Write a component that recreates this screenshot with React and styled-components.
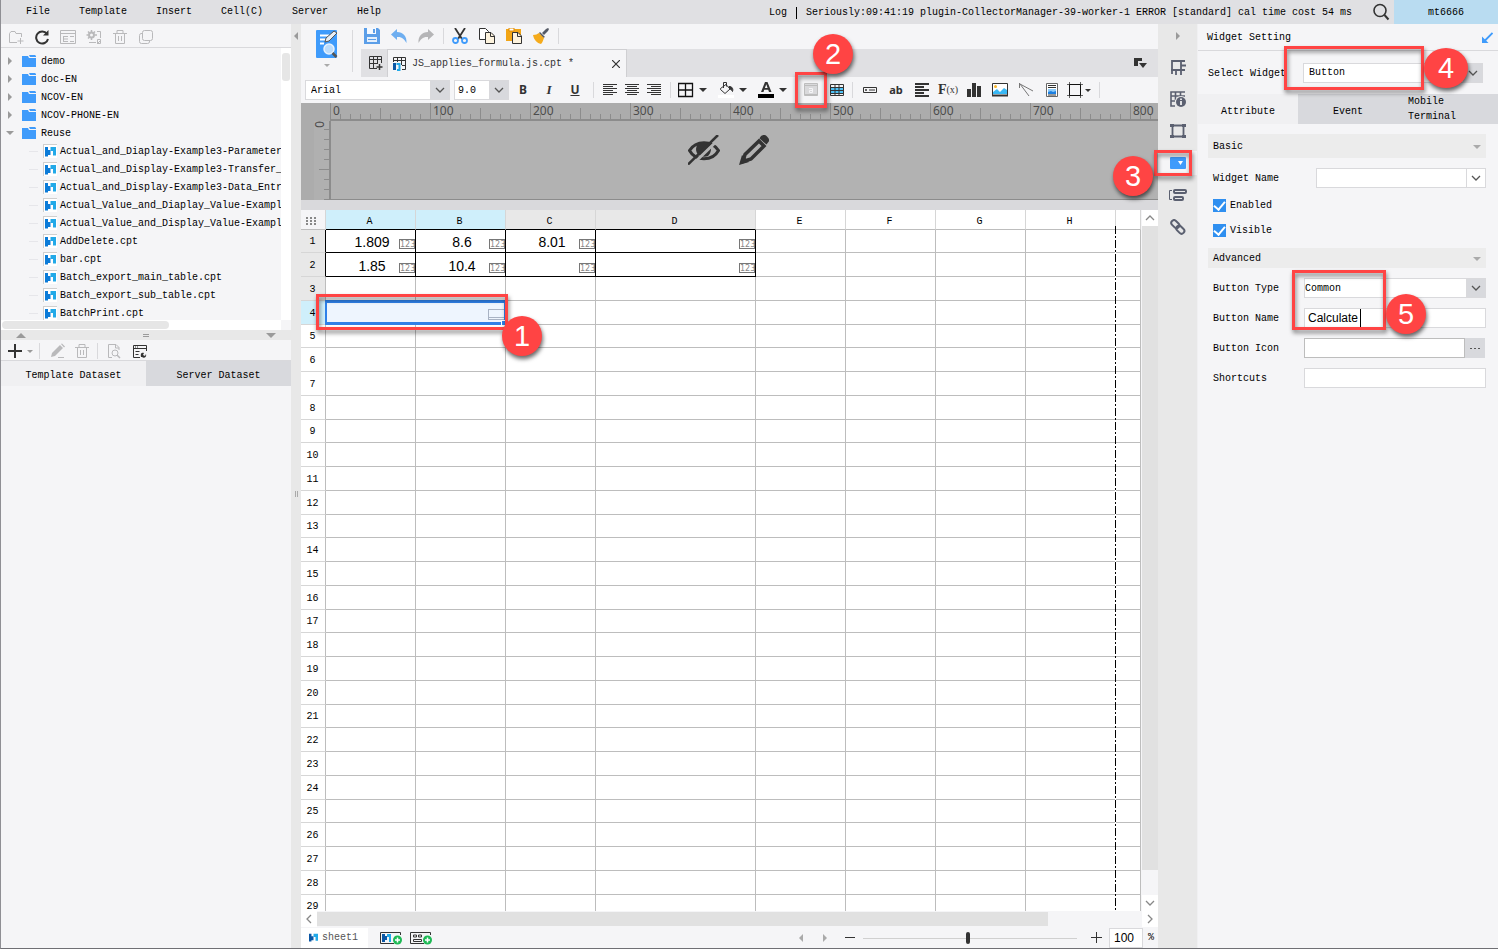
import React, { useState } from "react";
import styled, { createGlobalStyle, css } from "styled-components";

const mono = `"Liberation Mono", "Noto Sans CJK SC", monospace`;
const sans = `"Liberation Sans", Arial, sans-serif`;

const colors = {
  bar: "#e0e0e3",
  panel: "#f5f5f7",
  gutter: "#e8e8e8",
  line: "#d9d9dc",
  tab: "#d8d9dd",
  blue: "#3f9bfb",
  dark: "#333333",
  muted: "#b9b9bb",
  side: "#5b6070",
  grid: "#bdbdbd",
  callout: "#ff4444",
};

const GlobalStyle = createGlobalStyle`
  * {
    box-sizing: border-box;
  }
  body {
    margin: 0;
    overflow: hidden;
    font: 10px/14px ${mono};
    color: #000;
  }
  button, input, select {
    font: inherit;
    color: inherit;
    margin: 0;
    padding: 0;
    border: 0;
    border-radius: 0;
    background: none;
    outline: none;
  }
  svg {
    display: block;
    flex: none;
  }
`;

/* ---------- icons ---------- */

const Svg = ({ w = 16, h = 16, children, ...rest }) => (
  <svg
    width={w}
    height={h}
    viewBox={`0 0 ${w} ${h}`}
    fill="none"
    stroke={colors.dark}
    aria-hidden="true"
    {...rest}
  >
    {children}
  </svg>
);

const Triangle = ({ dir = "down", size = 4, color = "#9a9a9a" }) => {
  const s = size;
  const points = {
    down: `0,0 ${2 * s},0 ${s},${s}`,
    up: `0,${s} ${2 * s},${s} ${s},0`,
    right: `0,0 ${s},${s} 0,${2 * s}`,
    left: `${s},0 0,${s} ${s},${2 * s}`,
  };
  const tall = dir === "left" || dir === "right";
  return (
    <Svg w={tall ? s : 2 * s} h={tall ? 2 * s : s} stroke="none">
      <polygon points={points[dir]} fill={color} />
    </Svg>
  );
};

const Chevron = ({ dir = "down", color = "#555" }) => {
  const paths = {
    down: "M1 3l4 4 4-4",
    up: "M1 7l4-4 4 4",
    left: "M7 1L3 5l4 4",
    right: "M3 1l4 4-4 4",
  };
  return (
    <Svg w={10} h={10} stroke={color} strokeWidth="1.3">
      <path d={paths[dir]} />
    </Svg>
  );
};

const FolderIcon = () => (
  <Svg w={14} h={12} stroke="none">
    <path d="M0 1h6l1 2h7v9H0z" fill={colors.blue} />
    <path d="M7 0h6l1 1v1H8z" fill={colors.blue} />
  </Svg>
);

const Mark = ({ size = 11, dark = "#0b7bd8" }) => (
  <svg width={size} height={size} viewBox="0 0 11 11" aria-hidden="true">
    <path d="M0 1h3v3h2.500v5H3v1.500H0z" fill={dark} />
    <path d="M5.500 1H11v8.500H8V5H5.500z" fill="#22a9e8" />
  </svg>
);

const NewFolderIcon = () => (
  <Svg stroke={colors.muted}>
    <path d="M9 13.500H1.500v-9l1.500-2h4l1 2h5.500V8M12.500 9v6M9.500 12h6" />
  </Svg>
);
const RefreshIcon = () => (
  <Svg strokeWidth="2">
    <path d="M13 5a6 6 0 1 0 1 5" />
    <path d="M14.500 1v5.500H9z" fill={colors.dark} stroke="none" />
  </Svg>
);
const FormIcon = () => (
  <Svg stroke={colors.muted}>
    <path d="M.5 1.500h15v13H.5zM.5 4.500h15M3.500 7v6M3.500 7.500H8M3.500 10H8M3.500 12.500H8M10 7.500h4M10 12.500h4" />
  </Svg>
);
const GearDocIcon = () => (
  <Svg stroke={colors.muted}>
    <circle cx="5.500" cy="6" r="2.500" strokeWidth="2" />
    <path d="M5.500 1v2M5.500 9v2M.5 6h2M9 6h2M2 2.500l1.500 1.500M9 2.500L7.500 4M2 9.500L3.500 8" strokeWidth="1.500" />
    <path d="M11 2.500h3.500V9M3 13.500h7M11.500 10.500h3v4h-3zM11 15l4-4" />
  </Svg>
);
const TrashIcon = () => (
  <Svg stroke={colors.muted}>
    <path d="M1 4.500h14M5 4V1.500h6V4M3.500 5v9.500h9V5M6.500 7v5M9.500 7v5" />
  </Svg>
);
const StackIcon = () => (
  <Svg stroke={colors.muted}>
    <rect x="4.500" y="1.500" width="10" height="10" rx="2" />
    <path d="M4 4.500H3a2 2 0 0 0-1.500 2v6a2 2 0 0 0 2 2h6a2 2 0 0 0 2-1.500V12" />
  </Svg>
);
const PlusIcon = ({ size = 14, width = 2 }) => (
  <Svg w={size} h={size} strokeWidth={width}>
    <path d={`M0 ${size / 2}h${size}M${size / 2} 0v${size}`} />
  </Svg>
);
const EditIcon = () => (
  <Svg stroke="none">
    <path d="M1 14l1-4 8-8 3 3-8 8zM11 1l1-.5L15 3.500l-1 1z" fill={colors.muted} />
    <path d="M8 14.500h6" stroke={colors.muted} />
  </Svg>
);
const PreviewDocIcon = () => (
  <Svg stroke={colors.muted}>
    <path d="M6 14.500H2.500v-13H10l3 3V7M9.500 1.500v3.500H13" />
    <circle cx="9" cy="10" r="3" />
    <path d="M11 12l3 3" strokeWidth="1.500" />
  </Svg>
);
const DataConfigIcon = () => (
  <Svg>
    <path d="M8 14.500H1.500v-12h13V8M1.500 5.500h13M3.500 8.500h4M3.500 11.500h3M3 4h1M5 4h1" />
    <path d="M9 14c-1-4 1-5 3-4l-1 2 2 1 1-2c1 3-2 5-4 3z" fill={colors.dark} stroke="none" />
  </Svg>
);

const PreviewIcon = () => (
  <Svg w={24} h={30} stroke="none">
    <rect x="1" y="2" width="21" height="28" rx="1" fill={colors.blue} />
    <path d="M5 7.500h9M5 11.500h6M5 15.500h4" stroke="#fff" strokeWidth="2" />
    <path d="M10 14l1-4 8-7 3 2-8 8z" fill="#e8eef5" stroke="#555" />
    <circle cx="14" cy="21" r="5" fill="#bcdcfb" stroke="#e8f2fd" strokeWidth="1.500" />
    <path d="M17.500 25l4 4" stroke="#555" strokeWidth="2.500" />
  </Svg>
);
const SaveIcon = () => (
  <Svg stroke="none">
    <path d="M0 0h14l2 2v14H0z" fill="#5b9ee8" />
    <path d="M3 0h9v6H3z" fill="#f5f9ff" />
    <path d="M9 1h2v4H9z" fill="#5b9ee8" />
    <path d="M3 9h10v5H3z" fill="#e4effc" />
    <path d="M4 11.500h8" stroke="#5b9ee8" />
  </Svg>
);
const UndoIcon = ({ color = "#6eaef0", flip }) => (
  <Svg stroke="none">
    <path
      d="M6 1L0 6.500 6 12V9c5-.5 7 2 9.500 6C16 8 12 4 6 4z"
      fill={color}
      transform={flip ? "matrix(-1 0 0 1 16 0)" : undefined}
    />
  </Svg>
);
const CutIcon = () => (
  <Svg>
    <path d="M3 0l7 11M13 0L6 11" strokeWidth="1.800" />
    <circle cx="3.500" cy="12.500" r="2.500" stroke={colors.blue} strokeWidth="1.800" />
    <circle cx="12.500" cy="12.500" r="2.500" stroke={colors.blue} strokeWidth="1.800" />
  </Svg>
);
const CopyIcon = () => (
  <Svg>
    <path d="M.5.5h6l3 3v8h-9z" fill="#fff" />
    <path d="M6.500 4.500h5.500l3.500 3.500v7.500h-9z" fill="#fdf3de" />
    <path d="M11.500 4.500v4h4" />
  </Svg>
);
const PasteIcon = () => (
  <Svg>
    <path d="M0 1h15v12H0z" fill="#f2a516" stroke="none" />
    <path d="M3 0h5v3H3z" fill="#fff" stroke="#e08a00" />
    <path d="M6.500 4.500h5.500l3.500 3.500v7.500h-9z" fill="#fdf3de" />
    <path d="M11.500 4.500v4h4" />
  </Svg>
);
const BrushIcon = () => (
  <Svg stroke="none">
    <path d="M9 5l4-4 2-1 1 1-1 2-4 4z" fill="#555a66" />
    <path d="M7 4l5 5-2 1-4-5z" fill="#555a66" />
    <path d="M0 7c3 0 4-1 6-2l5 5c-1 2-1 4-3 6-4-1-7-4-8-9z" fill="#f5ab1c" />
  </Svg>
);
const NewSheetIcon = ({ mark }) => (
  <Svg>
    <path d="M9 13.500H1.500v-12h12V8M1.500 4.500h12M1.500 8.500h8M5.500 2v11M9.500 2v7" />
    {mark ? (
      <>
        <path d="M0 6h9v9H0z" fill={colors.panel} stroke="none" />
        <path d="M1 7h3v7H1z" fill="#0b57a5" stroke="none" />
        <path d="M4.500 8h3v6H5" stroke="#22a9e8" strokeWidth="2" />
        <path d="M10 13.500h3.500V8M10 9.500h3" />
      </>
    ) : (
      <path d="M11.500 9v6M8.500 12h6" strokeWidth="1.500" />
    )}
  </Svg>
);
const WindowListIcon = () => (
  <Svg w={13} h={12} stroke="none">
    <path d="M0 1h8v3H4v5H0z" fill={colors.dark} />
    <path d="M5 6h8l-4 5z" fill={colors.dark} />
  </Svg>
);
const AlignIcon = ({ align }) => {
  const rows = [14, 10, 14, 10, 14, 10];
  return (
    <Svg w={14} h={14}>
      {rows.map((len, i) => {
        const x = { left: 0, center: (14 - len) / 2, right: 14 - len }[align];
        return <path key={i} d={`M${x} ${i * 2 + 1.5}h${len}`} />;
      })}
    </Svg>
  );
};
const BorderIcon = () => (
  <Svg>
    <path d="M.5 1.500h14v13H.5zM7.500 1v14M0 8h15" strokeWidth="1.300" stroke="#111" />
  </Svg>
);
const BucketIcon = () => (
  <Svg>
    <path d="M2.500 6.500L8 2.500l4 4.500-5 4.500-4.500-4z" />
    <path d="M5.500 6V.500h3v4" />
    <path d="M11 4.500c3 0 4.500 2 3.500 5-1-2-2-2-2-2z" fill={colors.dark} />
    <path d="M0 13h16v3H0z" fill="#fff" stroke="none" />
  </Svg>
);
const FontColorIcon = () => (
  <Svg stroke="none">
    <path d="M3 10L7 0h2.500l4 10h-2.500l-.8-2.200H6.200L5.500 10zM6.900 6h2.700L8.300 2.300z" fill={colors.dark} fillRule="evenodd" />
    <path d="M0 12h16v4H0z" fill="#000" />
  </Svg>
);
const MergeIcon = () => (
  <Svg w={14} h={14} stroke="#bdbdbd">
    <path d="M.5.5h13v12H.5z" fill="#d9d9db" />
    <path d="M1 2.500h12M1 11.500h12" />
    <path d="M5 5.500h3.500v4H5.500v-2h3" stroke="#f5f5f7" />
  </Svg>
);
const TableIcon = () => (
  <Svg w={14} h={14}>
    <path d="M1 4h12v6H1z" fill="#4fc3f7" stroke="none" />
    <path d="M.5 1.500h13v11H.5zM1 4.500h12M1 7.500h12M1 10.500h12M5 1v12M9 1v12" />
  </Svg>
);
const InputIcon = () => (
  <Svg w={14} h={6}>
    <path d="M.5.5h13v5H.5zM6 3h6M2.500 2.500h1v1h-1z" />
  </Svg>
);
const TextIcon = () => (
  <Svg w={14} h={14} strokeWidth="1.800">
    <path d="M0 1h14M0 4h9M0 7h14M0 10h9M0 13h14" />
  </Svg>
);
const ChartIcon = () => (
  <Svg w={14} h={14} stroke="none">
    <path d="M0 6h4v8H0zM5 0h4v14H5zM10 3h4v11h-4z" fill={colors.dark} />
  </Svg>
);
const ImageIcon = () => (
  <Svg w={16} h={14}>
    <path d="M.5.5h15v12H.5z" fill="#fff" />
    <path d="M1 11V9l4-3 3 3 4-4 3 2v4z" fill="#39b8f5" stroke="none" />
    <circle cx="3.500" cy="3.500" r="1.500" fill="#f8b62b" stroke="none" />
    <path d="M0 12.500h16" strokeWidth="2" />
  </Svg>
);
const SlashIcon = () => (
  <Svg w={14} h={14} stroke="#777">
    <path d="M1 1l9 12M1 1l13 7M.5 0v5" />
  </Svg>
);
const ReportIcon = () => (
  <Svg w={12} h={14}>
    <path d="M.5.5h11v13H.5z" fill="#fff" stroke="#666" />
    <path d="M2 2.500h8M2 4.500h8M2 12h8" />
    <path d="M2 6h8v5H2z" fill="#8ccbfa" stroke="none" />
    <path d="M2 11V9l3-1 2 1 3-1v3z" fill="#1d7fe0" stroke="none" />
  </Svg>
);
const FrameIcon = () => (
  <Svg>
    <path d="M2.500 0v16M13.500 0v16M0 2.500h16M0 13.500h16" stroke="#666" />
    <path d="M2.500 2.500h11v11h-11z" stroke="#111" />
  </Svg>
);
const EyeOffIcon = () => (
  <Svg w={32} h={30}>
    <path d="M1.500 15.500C8 5 24 5 30.500 15.500c-6 11-23 11-29 0z" strokeWidth="3" />
    <path d="M9 9c4-3 10-2 13 0 2 4 1 9-2 12-5 2-12 0-12-7z" fill={colors.dark} stroke="none" />
    <path d="M4 30L32 3" stroke="#b2b2b2" strokeWidth="3" />
    <path d="M0 29.500L30 0" strokeWidth="2.500" />
  </Svg>
);
const PencilIcon = () => (
  <Svg w={32} h={30}>
    <path d="M4 26.500l2-7L20 6l5 5-13 13z" strokeWidth="3.500" />
    <path d="M0 30l3-10 7 7z" fill={colors.dark} stroke="none" />
    <path d="M21 2.500c2-3 5-3 7-1s3 4 1 6l-1.500 2-7-6z" fill={colors.dark} stroke="none" />
  </Svg>
);
const SearchIcon = () => (
  <Svg w={18} h={18}>
    <circle cx="8" cy="7.500" r="6" strokeWidth="1.600" />
    <path d="M12.500 12l4 4.500" strokeWidth="2" />
  </Svg>
);
const DetachIcon = () => (
  <Svg w={12} h={12} stroke={colors.blue} strokeWidth="1.800">
    <path d="M11.500 1L4 8.500" />
    <path d="M1 4.500V11h6.500z" fill={colors.blue} stroke="none" />
  </Svg>
);
const CellElementIcon = () => (
  <Svg stroke={colors.side} strokeWidth="1.800">
    <path d="M15 2H2v13M1 11h14M11 1v10M11 6.500h5M6 11v5M11 11v5" />
  </Svg>
);
const CellPropIcon = () => (
  <Svg stroke={colors.side} strokeWidth="1.600">
    <path d="M15 1H1v14h4M1 5h14M5.500 1v8M10.500 1v4M1 10h4" />
    <circle cx="11" cy="11" r="6" fill={colors.gutter} stroke="none" />
    <circle cx="11" cy="11" r="5" fill={colors.side} stroke="none" />
    <path d="M11 7.500v1.500M11 10v4" stroke="#fff" />
  </Svg>
);
const FloatIcon = () => (
  <Svg stroke={colors.side} strokeWidth="1.800">
    <path d="M2.500 2.500h11v11h-11z" />
    <path d="M0 1h4v3H0zM12 1h4v3h-4zM0 12h4v3H0zM12 12h4v3h-4z" fill={colors.side} stroke="none" />
  </Svg>
);
const WidgetIcon = () => (
  <Svg h={12} stroke="none">
    <rect width="16" height="12" rx="1" fill={colors.blue} />
    <path d="M8 4h5l-2.500 4z" fill="#fff" />
  </Svg>
);
const ConditionIcon = () => (
  <Svg w={18} h={14} stroke={colors.side}>
    <path d="M3 2.500H.5v9H3" />
    <rect x="5" y="2" width="12" height="3" rx="1" strokeWidth="2" />
    <rect x="5" y="9" width="9" height="3" rx="1" strokeWidth="2" />
  </Svg>
);
const LinkIcon = () => (
  <Svg stroke={colors.side} strokeWidth="2">
    <rect x="1" y="2.500" width="9" height="5.500" rx="2.700" transform="rotate(45 5.500 5)" />
    <rect x="6" y="8" width="9" height="5.500" rx="2.700" transform="rotate(45 10.500 10.500)" />
  </Svg>
);
const AddSheetIcon = ({ form }) => (
  <Svg w={23} h={14}>
    <path d="M14 12.500H.5V1.500h20V4" />
    {form ? (
      <path d="M3.500 4h3v2h-3zM8.500 4h3v2h-3zM3.500 8.500h8v2h-8z" />
    ) : (
      <>
        <path d="M2 3h3v2h2v4H5v2H2z" fill="#0b57a5" stroke="none" />
        <path d="M7 3h4v8H9V6H7z" fill="#22a9e8" stroke="none" />
      </>
    )}
    <circle cx="17.500" cy="9" r="4.500" fill="#1eb955" stroke="none" />
    <path d="M17.500 6.500v5M15 9h5" stroke="#fff" strokeWidth="1.500" />
  </Svg>
);
const GripIcon = () => (
  <Svg w={10} h={8} stroke="#888" strokeWidth="2" strokeDasharray="2 2">
    <path d="M0 1h10M0 4h10M0 7h10" />
  </Svg>
);

/* ---------- shared parts ---------- */

const IconButton = styled.button`
  display: flex;
  align-items: center;
  justify-content: center;
  flex: none;
  width: ${(p) => p.$w || 26}px;
  height: ${(p) => p.$h || 20}px;
`;

const Separator = styled.span`
  flex: none;
  width: 1px;
  height: ${(p) => p.$h || 16}px;
  margin: 0 ${(p) => p.$gap || 0}px;
  background: ${colors.line};
`;

const CalloutBox = styled.div`
  position: absolute;
  z-index: 5;
  left: ${(p) => p.$box[0]}px;
  top: ${(p) => p.$box[1]}px;
  width: ${(p) => p.$box[2]}px;
  height: ${(p) => p.$box[3]}px;
  border: 3px solid ${colors.callout};
  filter: drop-shadow(1px 3px 2px rgba(0, 0, 0, 0.5));
  pointer-events: none;
`;

const CalloutBadge = styled.div`
  position: absolute;
  z-index: 6;
  left: ${(p) => p.$at[0]}px;
  top: ${(p) => p.$at[1]}px;
  width: ${(p) => p.$w || 40}px;
  height: 40px;
  border-radius: 50%;
  background: ${colors.callout};
  box-shadow: 1px 3px 4px rgba(0, 0, 0, 0.6);
  color: #fff;
  font: 29px/41px ${sans};
  text-align: center;
  pointer-events: none;
`;

const Callout = ({ n, box, at, w }) => (
  <>
    <CalloutBox $box={box} />
    <CalloutBadge $at={at} $w={w}>
      {n}
    </CalloutBadge>
  </>
);

const ComboWrap = styled.div`
  position: relative;
  display: flex;
  flex: ${(p) => (p.$w ? "none" : 1)};
  width: ${(p) => (p.$w ? `${p.$w}px` : "auto")};
  height: 20px;
  select {
    flex: 1;
    min-width: 0;
    width: 100%;
    appearance: none;
    padding: 1px 20px 0 ${(p) => p.$pad ?? 5}px;
    border: 1px solid ${colors.line};
    background: #fff;
  }
`;

const ComboArrow = styled.span`
  position: absolute;
  top: 0;
  right: 0;
  display: flex;
  align-items: center;
  justify-content: center;
  width: 20px;
  height: 20px;
  background: ${(p) => (p.$plain ? "#fff" : colors.tab)};
  border: 1px solid ${colors.line};
  pointer-events: none;
`;

const Combo = ({ id, label, value, w, pad, plain }) => (
  <ComboWrap $w={w} $pad={pad}>
    <select id={id} aria-label={label} defaultValue={value}>
      <option>{value}</option>
    </select>
    <ComboArrow $plain={plain}>
      <Chevron />
    </ComboArrow>
  </ComboWrap>
);

/* ---------- page ---------- */

const Window = styled.div`
  display: flex;
  flex-direction: column;
  height: 100vh;
  overflow: hidden;
  border-left: 1px solid #8f8f94;
  border-bottom: 1px solid #6f6f74;
  background: ${colors.panel};
`;

const MenuBar = styled.header`
  display: flex;
  align-items: center;
  flex: none;
  height: 24px;
  background: ${colors.bar};
`;

const Menus = styled.nav`
  display: flex;
  flex: 1;
  gap: 29px;
  padding-left: 25px;
`;

const LogLine = styled.div`
  display: flex;
  align-items: center;
  gap: 9px;
  padding-top: 2px;
  white-space: nowrap;
`;

const LogBar = styled.span`
  width: 1px;
  height: 12px;
  background: #000;
`;

const User = styled.button`
  width: 104px;
  height: 24px;
  padding-top: 2px;
  background: #b9dcf1;
`;

const Workspace = styled.div`
  display: flex;
  flex: 1;
  min-height: 0;
`;

/* ---------- left side ---------- */

const LeftPanel = styled.aside`
  display: flex;
  flex-direction: column;
  flex: none;
  width: 290px;
`;

const LeftTools = styled.div`
  display: flex;
  align-items: center;
  flex: none;
  height: ${(p) => p.$h}px;
  padding: 2px 0 0 2px;
  border-bottom: 1px solid ${colors.line};
`;

const TreeArea = styled.div`
  display: grid;
  flex: none;
  grid-template: 272px 10px / 1fr 10px;
`;

const Tree = styled.ul`
  margin: 0;
  padding: 4px 0 0;
  list-style: none;
  overflow: hidden;
`;

const TreeRow = styled.li`
  display: flex;
  align-items: center;
  height: 18px;
  padding-left: ${(p) => (p.$nested ? 28 : 5)}px;
  white-space: nowrap;
`;

const TreeArrow = styled.span`
  display: flex;
  justify-content: center;
  width: 8px;
  margin-right: 8px;
`;

const TreeLine = styled.span`
  flex: none;
  width: 9px;
  height: 1px;
  margin-right: 5px;
  background: #e6e6ea;
`;

const FileBox = styled.span`
  display: flex;
  align-items: center;
  justify-content: center;
  flex: none;
  width: 14px;
  height: 14px;
  border: solid #cfcfcf;
  border-width: 1px 0 0 1px;
  background: #fff;
`;

const TreeText = styled.span`
  padding: 2px 0 0 ${(p) => (p.$nested ? 3 : 5)}px;
`;

const VTrack = styled.div`
  padding: 5px 1px;
  background: #fff;
  &::after {
    content: "";
    display: block;
    height: 28px;
    border-radius: 3px;
    background: #e6e6e6;
  }
`;

const HTrack = styled.div`
  padding: 1px;
  background: #fff;
  &::after {
    content: "";
    display: block;
    width: 60%;
    height: 8px;
    border-radius: 4px;
    background: #e6e6e6;
  }
`;

const Splitter = styled.div`
  display: flex;
  align-items: center;
  justify-content: space-between;
  flex: none;
  height: 10px;
  padding: 0 15px;
  background: ${colors.gutter};
`;

const SplitGrip = styled.span`
  width: 6px;
  height: 3px;
  border: solid #9a9a9a;
  border-width: 1px 0;
`;

const DatasetTabs = styled.div`
  display: flex;
  flex: none;
`;

const DatasetTab = styled.button`
  flex: 1;
  height: 25px;
  padding-top: 5px;
  background: ${(p) => (p.$active ? "#f0f0f2" : colors.tab)};
`;

const Gutter = styled.div`
  display: flex;
  flex-direction: column;
  align-items: center;
  justify-content: space-between;
  flex: none;
  width: 10px;
  padding: 8px 0 0;
  background: ${colors.gutter};
`;

const GutterGrip = styled.span`
  width: 3px;
  height: 6px;
  margin-bottom: auto;
  margin-top: auto;
  border: solid #aaa;
  border-width: 0 1px;
`;

/* ---------- editor ---------- */

const Editor = styled.main`
  display: flex;
  flex-direction: column;
  flex: 1;
  min-width: 0;
`;

const EditorHead = styled.div`
  display: flex;
  flex: none;
  height: 53px;
`;

const PreviewButton = styled.button`
  display: flex;
  flex-direction: column;
  align-items: center;
  gap: 6px;
  width: 51px;
  padding-top: 4px;
`;

const PreviewDivider = styled(Separator)`
  margin-top: 6px;
`;

const HeadRows = styled.div`
  display: flex;
  flex: 1;
  flex-direction: column;
  margin-left: 8px;
`;

const QuickTools = styled.div`
  display: flex;
  align-items: center;
  height: 25px;
  padding-bottom: 2px;
`;

const DocTabs = styled.div`
  display: flex;
  align-items: center;
  height: 28px;
  background: ${colors.bar};
`;

const NewDocButton = styled(IconButton)`
  padding-left: 4px;
`;

const DocTab = styled.div`
  display: flex;
  align-items: center;
  width: 240px;
  height: 28px;
  padding: 0 6px 0 4px;
  border: solid #cfcfd2;
  border-width: 1px 1px 0;
  background: ${colors.panel};
  color: #333;
  span {
    flex: 1;
    padding-left: 4px;
  }
`;

const DocTail = styled.div`
  display: flex;
  flex: 1;
  justify-content: flex-end;
  padding-right: 5px;
`;

const FormatBar = styled.div`
  display: flex;
  align-items: center;
  flex: none;
  height: 26px;
  padding-left: 4px;
`;

const FontGroup = styled.div`
  display: flex;
  gap: 4px;
  margin-right: 1px;
`;

const LetterButton = styled(IconButton)`
  font: bold 12px/16px "Noto Sans", sans-serif;
  color: ${colors.dark};
  ${(p) =>
    p.$italic &&
    css`
      font: italic bold 13px/16px "Liberation Serif", serif;
    `}
  ${(p) => p.$underline && "text-decoration: underline;"}
  ${(p) => p.$small && "font-size: 11px;"}
`;

const FormulaButton = styled(IconButton)`
  font: bold 14px/18px "Liberation Serif", serif;
  color: ${colors.dark};
  small {
    font-size: 10px;
    font-weight: normal;
  }
`;

const DropButton = styled.button`
  display: flex;
  align-items: center;
  flex: none;
  gap: 5px;
  width: 36px;
  height: 20px;
  margin-right: 4px;
  padding-left: 2px;
`;

const CalloutAnchor = styled.div`
  position: relative;
  flex: none;
`;

const ParamPane = styled.div`
  display: grid;
  flex: none;
  grid-template: 18px 79px / 29px 1fr;
  border-bottom: 10px solid ${colors.line};
  background: #acacac;
`;

const RulerH = styled.div`
  display: flex;
  grid-column: 2;
  overflow: hidden;
  border-bottom: 2px solid #8c8c8c;
`;

const RulerMark = styled.span`
  flex: none;
  width: 100px;
  padding-left: 3px;
  font: 12px/16px "Noto Sans", sans-serif;
  color: #4c4c4c;
  background: linear-gradient(#8c8c8c, #8c8c8c) 0 0 / 1px 16px no-repeat,
    linear-gradient(#8c8c8c, #8c8c8c) 50px 5px / 1px 11px no-repeat,
    linear-gradient(to right, #8c8c8c 1px, transparent 1px) 0 11px / 10px 5px
      repeat-x;
`;

const RulerV = styled.div`
  margin-left: 13px;
  border-right: 1px solid #8c8c8c;
  writing-mode: vertical-rl;
  font: 12px/20px "Noto Sans", sans-serif;
  color: #4c4c4c;
  background: linear-gradient(#8c8c8c, #8c8c8c) 5px 48px / 11px 1px no-repeat,
    linear-gradient(to bottom, transparent 8px, #8c8c8c 8px, #8c8c8c 9px, transparent 9px)
      right 0 / 5px 10px repeat-y,
    #b0b0b0;
`;

const ParamCanvas = styled.div`
  display: flex;
  justify-content: center;
  gap: 19px;
  padding: 14px 30px 0 0;
  border: solid #8c8c8c;
  border-width: 0 0 1px 1px;
  background: #b2b2b2;
`;

const SheetArea = styled.div`
  display: grid;
  flex: 1;
  min-height: 0;
  grid-template: minmax(0, 1fr) / minmax(0, 1fr) 17px;
`;

const GridView = styled.div`
  position: relative;
  overflow: hidden;
  background: #fff;
`;

// dash-dot line where the printed page ends
const PageEdge = styled.span`
  position: absolute;
  top: 16px;
  bottom: 0;
  left: 814px;
  width: 1px;
  background: repeating-linear-gradient(
    #000 0 8px,
    #fff 8px 10px,
    #000 10px 12px,
    #fff 12px 14px
  );
`;

const Table = styled.table`
  width: 100%;
  table-layout: fixed;
  border-collapse: separate;
  border-spacing: 0;
`;

const ColHead = styled.th`
  height: 20px;
  padding: 4px 2px 0 0;
  border: solid;
  border-width: 0 1px 1px 0;
  border-color: ${(p) => (p.$boxed ? "#d6d6d6 #d6d6d6 #000" : `#d6d6d6 #d6d6d6 ${colors.grid}`)};
  background: ${(p) => p.$bg || "#fff"};
  font-weight: normal;
  line-height: 14px;
`;

const Corner = styled(ColHead)`
  padding: 2px 0 0 5px;
  background: ${colors.panel};
`;

const RowHead = styled.th`
  padding: 2px 1px 0 0;
  border: solid;
  border-width: 0 1px 1px 0;
  border-color: #d6d6d6 ${(p) => (p.$boxed ? "#000" : colors.grid)} #d6d6d6;
  background: ${(p) => p.$bg || "#fff"};
  font-weight: normal;
  line-height: 14px;
`;

const Row = styled.tr`
  height: ${(p) => (p.$short ? 23 : 24)}px;
`;

const Cell = styled.td`
  position: relative;
  padding: 2px 0 0 3px;
  border: solid ${(p) => (p.$boxed ? "#000" : colors.grid)};
  border-width: 0 1px 1px 0;
  font: 14px/20px ${sans};
  text-align: center;
`;

const NumberTag = styled.span`
  position: absolute;
  right: 0;
  bottom: 3px;
  width: 16px;
  height: 10px;
  border: 1px solid #777;
  color: #888;
  font: 8px/9px "DejaVu Sans", sans-serif;
`;

const Selection = styled.div`
  position: absolute;
  inset: -1px 0 -1px -1px;
  border: solid #2f80e8;
  border-width: 3px 1px 3px 2px;
  background: #eef5fe;
  &::after {
    content: "";
    position: absolute;
    right: -1px;
    bottom: -3px;
    width: 3px;
    height: 4px;
    border: solid #fff;
    border-width: 1px 0 0 1px;
    background: #2f80e8;
  }
`;

const ButtonTag = styled.span`
  position: absolute;
  right: 0;
  bottom: 2px;
  width: 16px;
  height: 11px;
  border: 1px solid #a9b3c4;
  border-right: 0;
  border-bottom: 3px double #a9b3c4;
`;

const VScroll = styled.div`
  display: flex;
  flex-direction: column;
  border-left: 1px solid ${colors.panel};
`;

const ScrollButton = styled.button`
  display: flex;
  align-items: center;
  justify-content: center;
  flex: none;
  width: 16px;
  height: 16px;
  background: #fff;
`;

const VThumb = styled.div`
  flex: 644;
  background: #e1e1e1;
`;

const HScroll = styled.div`
  display: flex;
  flex: none;
  height: 16px;
`;

const HThumb = styled.div`
  flex: 731;
  margin: 1px 0;
  background: #e1e1e1;
`;

const Spare = styled.div`
  flex: ${(p) => p.$grow};
`;

const SheetBar = styled.footer`
  display: flex;
  align-items: center;
  flex: none;
  height: 21px;
`;

const SheetTab = styled.button`
  display: flex;
  align-items: center;
  gap: 4px;
  width: 67px;
  height: 20px;
  margin-right: 8px;
  padding-left: 8px;
  background: #fff;
  color: #555;
`;

const ZoomRange = styled.input`
  appearance: none;
  width: 214px;
  height: 16px;
  margin-right: 6px;
  background: linear-gradient(#d0d0d0, #d0d0d0) 0 8px / 100% 1px no-repeat;
  &::-webkit-slider-thumb {
    appearance: none;
    width: 4px;
    height: 12px;
    border-radius: 2px;
    background: #333;
  }
`;

const ZoomInput = styled.input`
  width: 34px;
  height: 20px;
  margin: 0 5px 0 0;
  padding-left: 4px;
  border: 1px solid ${colors.line};
  background: #fff;
  font: 12px/18px ${sans};
`;

const ZoomUnit = styled.span`
  width: 10px;
`;

/* ---------- right side ---------- */

const SearchButton = styled(IconButton)`
  padding-left: 16px;
`;

const SideStrip = styled.nav`
  display: flex;
  flex-direction: column;
  align-items: center;
  flex: none;
  width: 40px;
  padding-top: 8px;
  border-right: 1px solid #f0f0f2;
  background: ${colors.gutter};
`;

const SideTabs = styled.div`
  position: relative;
  width: 100%;
  margin-top: 11px;
`;

const SideTab = styled.button`
  display: flex;
  align-items: center;
  justify-content: center;
  width: 100%;
  height: 32px;
  padding: 4px 0;
  background: ${(p) => (p.$active ? colors.panel : "none")};
  background-clip: content-box;
`;

const WidgetPanel = styled.aside`
  position: relative;
  flex: none;
  width: 300px;
`;

const PanelTitle = styled.h2`
  display: flex;
  align-items: center;
  justify-content: space-between;
  height: 27px;
  margin: 0;
  padding: 2px 5px 0 9px;
  border-bottom: 1px solid ${colors.line};
  font: inherit;
`;

const WidgetRow = styled.div`
  display: flex;
  align-items: center;
  height: 43px;
  padding: 0 15px 0 10px;
  label {
    width: 95px;
    padding-top: 2px;
  }
`;

const PanelTabs = styled.div`
  display: grid;
  grid-template-columns: repeat(3, 1fr);
`;

const PanelTab = styled.button`
  height: 30px;
  padding: ${(p) => (p.$wrap ? "0 30px 0 10px" : "5px 0 0")};
  background: ${(p) => (p.$active ? "#f0f0f2" : colors.tab)};
  line-height: 15px;
  text-align: ${(p) => (p.$wrap ? "left" : "center")};
`;

const PanelBody = styled.div`
  display: flex;
  flex-direction: column;
  gap: 10px;
  padding: 10px 12px 0 10px;
`;

const SectionHead = styled.button`
  display: flex;
  align-items: center;
  justify-content: space-between;
  height: ${(p) => p.$h}px;
  padding: 2px 5px 0;
  background: #ececec;
`;

const Field = styled.div`
  display: flex;
  align-items: center;
  height: 20px;
  padding-left: 5px;
  label {
    flex: none;
    width: ${(p) => (p.$wide ? 103 : 91)}px;
    padding-top: 2px;
  }
`;

const TextBox = styled.input`
  flex: 1;
  min-width: 0;
  height: 20px;
  padding: 0 3px;
  border: 1px solid ${(p) => (p.$strong ? "#bdbdbd" : colors.line)};
  background: #fff;
  font: 12px/18px ${sans};
`;

const MoreButton = styled.button`
  display: flex;
  align-items: center;
  justify-content: center;
  gap: 2px;
  width: 20px;
  height: 20px;
  margin-right: 1px;
  background: ${colors.tab};
`;

const MoreDot = styled.span`
  width: 2px;
  height: 1px;
  background: #555;
`;

const Caret = styled.span`
  position: absolute;
  top: 1px;
  left: 56px;
  width: 1px;
  height: 18px;
  background: #000;
`;

const NameBox = styled.div`
  position: relative;
  display: flex;
  flex: 1;
`;

const CheckLabel = styled.label`
  display: flex;
  align-items: center;
  gap: 4px;
  height: 15px;
  padding-left: 5px;
`;

const CheckBox = styled.input`
  appearance: none;
  display: grid;
  place-items: center;
  width: 13px;
  height: 13px;
  background: #ccc;
  &:checked {
    background: #2f8ff0;
  }
  &:checked::after {
    content: "";
    width: 5px;
    height: 9px;
    margin-bottom: 2px;
    border: solid #fff;
    border-width: 0 2px 2px 0;
    transform: rotate(40deg);
  }
`;

/* ---------- data ---------- */

const menus = ["File", "Template", "Insert", "Cell(C)", "Server", "Help"];
const folders = ["demo", "doc-EN", "NCOV-EN", "NCOV-PHONE-EN", "Reuse"];
const files = [
  "Actual_and_Diaplay-Example3-Parameter",
  "Actual_and_Display-Example3-Transfer_",
  "Actual_and_Display-Example3-Data_Entr",
  "Actual_Value_and_Diaplay_Value-Exampl",
  "Actual_Value_and_Display_Value-Exampl",
  "AddDelete.cpt",
  "bar.cpt",
  "Batch_export_main_table.cpt",
  "Batch_export_sub_table.cpt",
  "BatchPrint.cpt",
];
const leftTools = [
  ["New folder", NewFolderIcon],
  ["Refresh", RefreshIcon],
  ["Show form", FormIcon],
  ["Settings", GearDocIcon],
  ["Delete", TrashIcon],
  ["Copy", StackIcon],
];
const insertTools = [
  ["Text field", InputIcon],
  ["Label", null],
  ["Rich text", TextIcon],
  ["Formula", null],
  ["Chart", ChartIcon],
  ["Image", ImageIcon],
  ["Slash", SlashIcon],
  ["Sub report", ReportIcon],
];
const sideTabs = [
  ["Cell element", CellElementIcon],
  ["Cell attribute", CellPropIcon],
  ["Floating element", FloatIcon],
  ["Widget setting", WidgetIcon],
  ["Condition", ConditionIcon],
  ["Hyperlink", LinkIcon],
];
const columns = ["A", "B", "C", "D", "E", "F", "G", "H", ""];
const colWidths = [25, 90, 90, 90, 160, 90, 90, 90, 90];
const values = {
  1: ["1.809", "8.6", "8.01", ""],
  2: ["1.85", "10.4", "", ""],
};

const colBg = (i) => (i < 2 ? "#cfeffb" : i < 4 ? "#e8e8e8" : "#fff");
const rowBg = (n) => (n === 4 ? "#cfeffb" : n < 4 ? "#e8e8e8" : "#fff");

/* ---------- components ---------- */

function TemplateTree() {
  return (
    <TreeArea>
      <Tree>
        {folders.map((name) => (
          <TreeRow key={name}>
            <TreeArrow>
              <Triangle dir={name === "Reuse" ? "down" : "right"} />
            </TreeArrow>
            <FolderIcon />
            <TreeText>{name}</TreeText>
          </TreeRow>
        ))}
        {files.map((name) => (
          <TreeRow key={name} $nested>
            <TreeLine />
            <FileBox>
              <Mark />
            </FileBox>
            <TreeText $nested>{name}</TreeText>
          </TreeRow>
        ))}
      </Tree>
      <VTrack />
      <HTrack />
    </TreeArea>
  );
}

function Left() {
  const [tab, setTab] = useState("Template Dataset");
  return (
    <LeftPanel>
      <LeftTools $h={24}>
        {leftTools.map(([label, Icon]) => (
          <IconButton key={label} aria-label={label}>
            <Icon />
          </IconButton>
        ))}
      </LeftTools>
      <TemplateTree />
      <Splitter>
        <Triangle dir="up" size={5} />
        <SplitGrip />
        <Triangle size={5} />
      </Splitter>
      <LeftTools $h={21}>
        <IconButton $w={24} aria-label="Add dataset">
          <PlusIcon />
        </IconButton>
        <Triangle size={3} />
        <Separator $gap={6} />
        <IconButton $w={24} aria-label="Edit dataset">
          <EditIcon />
        </IconButton>
        <IconButton $w={24} aria-label="Delete dataset">
          <TrashIcon />
        </IconButton>
        <Separator $gap={3} />
        <IconButton aria-label="Preview dataset">
          <PreviewDocIcon />
        </IconButton>
        <IconButton aria-label="Dataset settings">
          <DataConfigIcon />
        </IconButton>
      </LeftTools>
      <DatasetTabs>
        {["Template Dataset", "Server Dataset"].map((name) => (
          <DatasetTab key={name} $active={tab === name} onClick={() => setTab(name)}>
            {name}
          </DatasetTab>
        ))}
      </DatasetTabs>
    </LeftPanel>
  );
}

function EditorHeader() {
  return (
    <EditorHead>
      <PreviewButton aria-label="Preview">
        <PreviewIcon />
        <Triangle size={3} color="#aaa" />
      </PreviewButton>
      <PreviewDivider $h={42} />
      <HeadRows>
        <QuickTools>
          <IconButton $w={22} aria-label="Save">
            <SaveIcon />
          </IconButton>
          <IconButton $w={32} aria-label="Undo">
            <UndoIcon />
          </IconButton>
          <IconButton $w={22} aria-label="Redo">
            <UndoIcon color="#b5b5b7" flip />
          </IconButton>
          <Separator $gap={6} />
          <IconButton $w={20} aria-label="Cut">
            <CutIcon />
          </IconButton>
          <IconButton $w={34} aria-label="Copy">
            <CopyIcon />
          </IconButton>
          <IconButton $w={20} aria-label="Paste">
            <PasteIcon />
          </IconButton>
          <IconButton $w={34} aria-label="Format brush">
            <BrushIcon />
          </IconButton>
          <Separator />
        </QuickTools>
        <DocTabs>
          <NewDocButton aria-label="New template">
            <NewSheetIcon />
          </NewDocButton>
          <DocTab>
            <NewSheetIcon mark />
            <span>JS_applies_formula.js.cpt *</span>
            <button aria-label="Close template">
              <Svg w={8} h={8}>
                <path d="M0 0l8 8M8 0L0 8" strokeWidth="1.200" />
              </Svg>
            </button>
          </DocTab>
          <DocTail>
            <IconButton aria-label="Open templates">
              <WindowListIcon />
            </IconButton>
          </DocTail>
        </DocTabs>
      </HeadRows>
    </EditorHead>
  );
}

function Formatting() {
  return (
    <FormatBar>
      <FontGroup>
        <Combo label="Font" value="Arial" w={145} />
        <Combo label="Font size" value="9.0" w={55} pad={3} />
      </FontGroup>
      <LetterButton aria-label="Bold">B</LetterButton>
      <LetterButton aria-label="Italic" $italic>
        I
      </LetterButton>
      <LetterButton aria-label="Underline" $underline>
        U
      </LetterButton>
      <Separator $gap={5} />
      {["left", "center", "right"].map((align) => (
        <IconButton key={align} $w={22} aria-label={`Align ${align}`}>
          <AlignIcon align={align} />
        </IconButton>
      ))}
      <Separator $gap={5} />
      {[
        ["Border", BorderIcon],
        ["Fill", BucketIcon],
        ["Text colour", FontColorIcon],
      ].map(([label, Icon]) => (
        <DropButton key={label} aria-label={label}>
          <Icon />
          <Triangle color="#333" />
        </DropButton>
      ))}
      <CalloutAnchor>
        <IconButton $w={30} aria-label="Merge cells">
          <MergeIcon />
        </IconButton>
        <Callout n="2" box={[-1, -8, 32, 36]} at={[17, -46]} />
      </CalloutAnchor>
      <IconButton $w={22} aria-label="Table">
        <TableIcon />
      </IconButton>
      <Separator $gap={4} />
      {insertTools.map(([label, Icon]) => {
        if (label === "Label") {
          return (
            <LetterButton key={label} aria-label={label} $small>
              ab
            </LetterButton>
          );
        }
        if (label === "Formula") {
          return (
            <FormulaButton key={label} aria-label={label}>
              F<small>(x)</small>
            </FormulaButton>
          );
        }
        return (
          <IconButton key={label} aria-label={label}>
            <Icon />
          </IconButton>
        );
      })}
      <IconButton $w={20} aria-label="Floating element">
        <FrameIcon />
      </IconButton>
      <Triangle size={3} color="#333" />
      <Separator $gap={8} />
    </FormatBar>
  );
}

function Sheet() {
  const rows = Array.from({ length: 29 }, (_, i) => i + 1);
  return (
    <GridView>
      <Table>
        <colgroup>
          {colWidths.map((w, i) => (
            <col key={i} style={{ width: w }} />
          ))}
          <col />
        </colgroup>
        <thead>
          <tr>
            <Corner>
              <GripIcon />
            </Corner>
            {columns.map((name, i) => (
              <ColHead key={i} $bg={colBg(i)} $boxed={i < 4}>
                {name}
              </ColHead>
            ))}
          </tr>
        </thead>
        <tbody>
          {rows.map((n) => (
            <Row key={n} $short={n % 4 === 1}>
              <RowHead $bg={rowBg(n)} $boxed={n < 3}>
                {n}
              </RowHead>
              {columns.map((name, i) => {
                if (n === 4 && i === 1) return null;
                if (n === 4 && i === 0) {
                  return (
                    <Cell key={i} colSpan={2}>
                      <Selection>
                        <ButtonTag />
                      </Selection>
                      <Callout n="1" box={[-10, -7, 192, 36]} at={[176, 15]} />
                    </Cell>
                  );
                }
                const boxed = n < 3 && i < 4;
                return (
                  <Cell key={i} $boxed={boxed}>
                    {boxed && values[n][i]}
                    {boxed && <NumberTag>123</NumberTag>}
                  </Cell>
                );
              })}
            </Row>
          ))}
        </tbody>
      </Table>
      <PageEdge />
    </GridView>
  );
}

function WidgetSetting() {
  const [tab, setTab] = useState("Attribute");
  return (
    <WidgetPanel>
      <PanelTitle>
        Widget Setting
        <DetachIcon />
      </PanelTitle>
      <WidgetRow>
        <label htmlFor="widget">Select Widget</label>
        <Combo id="widget" value="Button" />
      </WidgetRow>
      <PanelTabs>
        {["Attribute", "Event", "Mobile Terminal"].map((name) => (
          <PanelTab
            key={name}
            $active={tab === name}
            $wrap={name === "Mobile Terminal"}
            onClick={() => setTab(name)}
          >
            {name}
          </PanelTab>
        ))}
      </PanelTabs>
      <PanelBody>
        <SectionHead $h={24}>
          Basic
          <Triangle color="#aaa" />
        </SectionHead>
        <Field $wide>
          <label htmlFor="widget-name">Widget Name</label>
          <Combo id="widget-name" value="" plain />
        </Field>
        <CheckLabel>
          <CheckBox type="checkbox" defaultChecked />
          Enabled
        </CheckLabel>
        <CheckLabel>
          <CheckBox type="checkbox" defaultChecked />
          Visible
        </CheckLabel>
        <SectionHead $h={20}>
          Advanced
          <Triangle color="#aaa" />
        </SectionHead>
        <Field>
          <label htmlFor="button-type">Button Type</label>
          <Combo id="button-type" value="Common" pad={0} />
        </Field>
        <Field>
          <label htmlFor="button-name">Button Name</label>
          <NameBox>
            <TextBox id="button-name" defaultValue="Calculate" />
            <Caret />
          </NameBox>
        </Field>
        <Field>
          <label htmlFor="button-icon">Button Icon</label>
          <TextBox id="button-icon" $strong />
          <MoreButton aria-label="Choose icon">
            <MoreDot />
            <MoreDot />
            <MoreDot />
          </MoreButton>
        </Field>
        <Field>
          <label htmlFor="shortcuts">Shortcuts</label>
          <TextBox id="shortcuts" />
        </Field>
      </PanelBody>
      <Callout n="4" box={[86, 22, 140, 44]} at={[226, 24]} w={44} />
      <Callout n="5" box={[94, 246, 94, 60]} at={[188, 270]} />
    </WidgetPanel>
  );
}

export default function App() {
  return (
    <>
      <GlobalStyle />
      <Window>
        <MenuBar>
          <Menus>
            {menus.map((name) => (
              <button key={name}>{name}</button>
            ))}
          </Menus>
          <LogLine>
            <span>Log</span>
            <LogBar />
            <span>
              Seriously:09:41:19 plugin-CollectorManager-39-worker-1 ERROR
              [standard] cal time cost 54 ms
            </span>
          </LogLine>
          <SearchButton $w={42} aria-label="Search">
            <SearchIcon />
          </SearchButton>
          <User>mt6666</User>
        </MenuBar>
        <Workspace>
          <Left />
          <Gutter>
            <Triangle dir="left" />
            <GutterGrip />
          </Gutter>
          <Editor>
            <EditorHeader />
            <Formatting />
            <ParamPane>
              <RulerH>
                {[0, 100, 200, 300, 400, 500, 600, 700, 800].map((n) => (
                  <RulerMark key={n}>{n}</RulerMark>
                ))}
              </RulerH>
              <RulerV>0</RulerV>
              <ParamCanvas>
                <EyeOffIcon />
                <PencilIcon />
              </ParamCanvas>
            </ParamPane>
            <SheetArea>
              <Sheet />
              <VScroll>
                <ScrollButton aria-label="Scroll up">
                  <Chevron dir="up" color="#888" />
                </ScrollButton>
                <VThumb />
                <Spare $grow={25} />
                <ScrollButton aria-label="Scroll down">
                  <Chevron color="#888" />
                </ScrollButton>
              </VScroll>
            </SheetArea>
            <HScroll>
              <ScrollButton aria-label="Scroll left">
                <Chevron dir="left" color="#888" />
              </ScrollButton>
              <HThumb />
              <Spare $grow={94} />
              <ScrollButton aria-label="Scroll right">
                <Chevron dir="right" color="#888" />
              </ScrollButton>
            </HScroll>
            <SheetBar>
              <SheetTab>
                <Mark size={9} dark="#0b57a5" />
                sheet1
              </SheetTab>
              <IconButton $w={30} aria-label="Add sheet">
                <AddSheetIcon />
              </IconButton>
              <IconButton $w={30} aria-label="Add form sheet">
                <AddSheetIcon form />
              </IconButton>
              <Spare $grow={1} />
              <IconButton $w={24} aria-label="Previous sheet">
                <Triangle dir="left" color="#aaa" />
              </IconButton>
              <IconButton $w={24} aria-label="Next sheet">
                <Triangle dir="right" color="#aaa" />
              </IconButton>
              <IconButton aria-label="Zoom out">
                <Svg w={10} h={2}>
                  <path d="M0 .5h10" />
                </Svg>
              </IconButton>
              <ZoomRange type="range" aria-label="Zoom" defaultValue="49" />
              <IconButton aria-label="Zoom in">
                <PlusIcon size={11} width={1} />
              </IconButton>
              <ZoomInput aria-label="Zoom percent" defaultValue="100" />
              <ZoomUnit>%</ZoomUnit>
            </SheetBar>
          </Editor>
          <SideStrip>
            <Triangle dir="right" />
            <SideTabs>
              {sideTabs.map(([label, Icon]) => (
                <SideTab key={label} aria-label={label} $active={label === "Widget setting"}>
                  <Icon />
                </SideTab>
              ))}
              <Callout n="3" box={[-4, 99, 38, 26]} at={[-45, 105]} />
            </SideTabs>
          </SideStrip>
          <WidgetSetting />
        </Workspace>
      </Window>
    </>
  );
}
